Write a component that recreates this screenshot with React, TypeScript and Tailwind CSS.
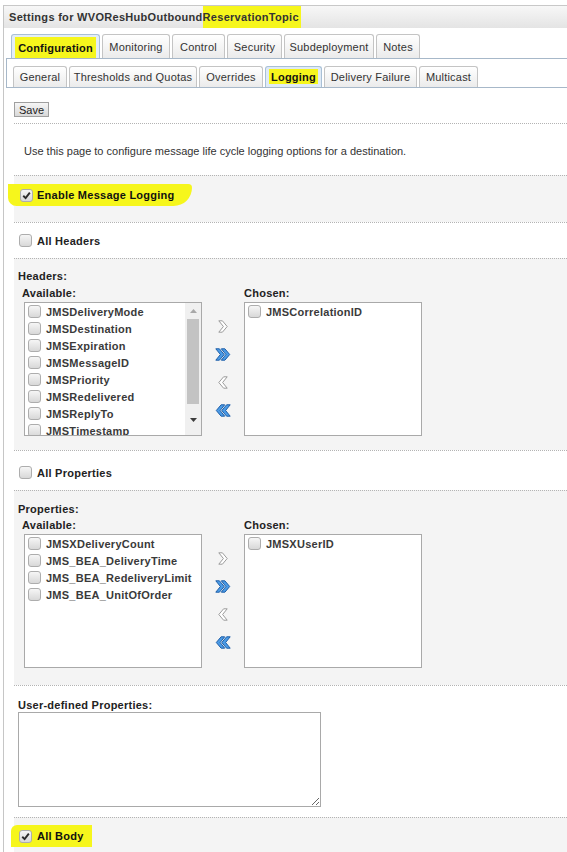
import React from "react";

const HL = "bg-[#f6f61c]";

function Box({ checked = false }: { checked?: boolean }) {
  return (
    <span className="inline-flex h-[13px] w-[13px] shrink-0 items-center justify-center rounded-[3px] border border-[#adadad] bg-gradient-to-b from-[#f6f6f6] to-[#d8d8d8]">
      {checked && (
        <svg viewBox="0 0 10 10" className="h-[9px] w-[9px]">
          <path d="M1.4 5.3 L4 7.9 L8.7 1.8" fill="none" stroke="#2b2b2b" strokeWidth="2.1" />
        </svg>
      )}
    </span>
  );
}

function Chevron({ dir, double }: { dir: "right" | "left"; double?: boolean }) {
  const fill = double ? "#4b9be6" : "#ffffff";
  const stroke = double ? "#1f5fa8" : "#9c9c9c";
  const shape = "M0.8 0.8 H4.4 L9.2 6.5 L4.4 12.2 H0.8 L5.4 6.5 Z";
  return (
    <svg viewBox="0 0 16 13" className="h-[13px] w-[16px]">
      <g transform={dir === "left" ? "translate(16 0) scale(-1 1)" : undefined}>
        {double ? (
          <>
            <path d={shape} fill={fill} stroke={stroke} strokeWidth="1" strokeLinejoin="round" />
            <path d={shape} transform="translate(5.5 0)" fill={fill} stroke={stroke} strokeWidth="1" strokeLinejoin="round" />
          </>
        ) : (
          <path d={shape} transform="translate(3 0)" fill={fill} stroke={stroke} strokeWidth="1" strokeLinejoin="round" />
        )}
      </g>
    </svg>
  );
}

function ListBox({ items, scroll }: { items: string[]; scroll?: boolean }) {
  return (
    <div className="relative h-[134px] w-[178px] overflow-hidden border border-[#a9a9a9] bg-white">
      <div className="pl-[3px]">
        {items.map((it) => (
          <div key={it} className="flex h-[17px] items-center gap-[5px]">
            <Box />
            <span className="whitespace-nowrap font-bold tracking-[0.25px] text-[#3a3a3a]">{it}</span>
          </div>
        ))}
      </div>
      {scroll && (
        <div className="absolute bottom-0 right-0 top-0 flex w-[16px] flex-col bg-[#f0f0f0]">
          <div className="flex h-[16px] items-center justify-center">
            <svg viewBox="0 0 7 4" className="h-[4px] w-[7px]">
              <path d="M0 4 L3.5 0 L7 4 Z" fill="#a8a8a8" />
            </svg>
          </div>
          <div className="mx-[2px] h-[85px] bg-[#c3c3c3]" />
          <div className="flex flex-1 items-center justify-center">
            <svg viewBox="0 0 7 4" className="h-[4px] w-[7px]">
              <path d="M0 0 L3.5 4 L7 0 Z" fill="#3c3c3c" />
            </svg>
          </div>
        </div>
      )}
    </div>
  );
}

function Shuttle({ available, chosen, scroll }: { available: string[]; chosen: string[]; scroll?: boolean }) {
  return (
    <div className="flex">
      <div className="flex flex-col">
        <div className="ml-[4px] h-[14px] font-bold leading-[14px] tracking-[0.25px] text-[#222]">Available:</div>
        <div className="ml-[6px] mt-[2px]">
          <ListBox items={available} scroll={scroll} />
        </div>
      </div>
      <div className="flex w-[42px] flex-col items-center pt-[34px]">
        <div className="flex h-[28px] items-start"><Chevron dir="right" /></div>
        <div className="flex h-[28px] items-start"><Chevron dir="right" double /></div>
        <div className="flex h-[28px] items-start"><Chevron dir="left" /></div>
        <div className="flex h-[28px] items-start"><Chevron dir="left" double /></div>
      </div>
      <div className="flex flex-col">
        <div className="h-[14px] font-bold leading-[14px] tracking-[0.25px] text-[#222]">Chosen:</div>
        <div className="mt-[2px]">
          <ListBox items={chosen} />
        </div>
      </div>
    </div>
  );
}

const mainTabs = [
  { label: "Monitoring", w: "w-[68px]" },
  { label: "Control", w: "w-[53px]" },
  { label: "Security", w: "w-[55px]" },
  { label: "Subdeployment", w: "w-[90px]" },
  { label: "Notes", w: "w-[44px]" },
];

const subTabs = [
  { label: "General", w: "w-[54px]" },
  { label: "Thresholds and Quotas", w: "w-[128px]" },
  { label: "Overrides", w: "w-[64px]" },
  { label: "Logging", w: "w-[57px]", active: true },
  { label: "Delivery Failure", w: "w-[93px]" },
  { label: "Multicast", w: "w-[59px]" },
];

const tabBase =
  "flex items-center justify-center rounded-t-[3px] border border-b-0 border-[#c4c4c4] bg-gradient-to-b from-white to-[#ebebeb] tracking-[0.2px] text-[#333]";

export default function App() {
  return (
    <div className="min-h-[852px] bg-white pl-[3px] pt-[5px] font-['Liberation_Sans',Tahoma,Arial,sans-serif] text-[11px] leading-[14px] text-[#333]">
      <div className="min-h-[847px] border-l border-[#c6c6c6]">
        {/* title bar */}
        <div className="flex h-[23px] items-center border-t border-[#c8c8c8] bg-gradient-to-b from-[#f7f7f7] to-[#e4e4e4] pl-[5px] font-bold tracking-[0.3px] text-[#333]">
          <span>Settings for WVOResHubOutbound</span>
          <span className={`${HL} flex h-[22px] items-center pr-[2px]`}>ReservationTopic</span>
        </div>

        {/* main tabs */}
        <div className="mt-[6px] flex h-[24px] gap-[2px] pl-[7px]">
          <div className="flex w-[89px] items-center justify-center rounded-t-[3px] border border-b-0 border-[#a9c0d6] bg-[#e3edf7] px-[3px] pt-[2px]">
            <span className={`${HL} flex h-[21px] w-full items-center justify-center font-bold tracking-[0.2px] text-[#111]`}>Configuration</span>
          </div>
          {mainTabs.map((t) => (
            <div key={t.label} className={`${tabBase} ${t.w}`}>
              {t.label}
            </div>
          ))}
        </div>

        {/* sub tabs */}
        <div className="ml-[2px] h-[30px] border-y border-l border-[#a7b8c9] pl-[6px] pt-[7px]">
          <div className="flex h-[21px] gap-[2px]">
            {subTabs.map((t) =>
              t.active ? (
                <div key={t.label} className={`flex ${t.w} flex-col rounded-t-[3px] border border-b-0 border-[#a9c0d6] bg-[#dfeaf6] px-[3px] pt-[2px]`}>
                  <span className={`${HL} flex h-[15px] items-center justify-center font-bold tracking-[0.2px] text-[#111]`}>{t.label}</span>
                </div>
              ) : (
                <div key={t.label} className={`${tabBase} ${t.w}`}>
                  {t.label}
                </div>
              )
            )}
          </div>
        </div>

        {/* content */}
        <div className="pl-[10px]">
          <div className="pb-[6px] pt-[14px]">
            <button className="flex h-[15px] w-[35px] items-center justify-center border border-[#9f9f9f] bg-gradient-to-b from-[#f6f6f6] to-[#d9d9d9] text-[11px] text-[#222]">
              Save
            </button>
          </div>

          <div className="h-[52px] border-t border-dotted border-[#b3b3b3] pl-[10px] pt-[20px]">
            Use this page to configure message life cycle logging options for a destination.
          </div>

          <div className="h-[47px] border-t border-dotted border-[#b3b3b3] bg-[#f4f4f4] pt-[8px]">
            <div className={`${HL} -ml-[6px] inline-flex h-[22px] w-[184px] items-center gap-[4px] rounded-bl-[14px] rounded-br-[30px] rounded-tr-[6px] pl-[12px]`}>
              <Box checked />
              <span className="font-bold tracking-[0.25px] text-[#111]">Enable Message Logging</span>
            </div>
          </div>

          <div className="flex h-[36px] items-start gap-[5px] border-t border-dotted border-[#b3b3b3] pl-[5px] pt-[11px]">
            <Box />
            <span className="font-bold tracking-[0.25px] text-[#222]">All Headers</span>
          </div>

          <div className="h-[192px] border-t border-dotted border-[#b3b3b3] bg-[#f4f4f4] pl-[4px] pt-[10px]">
            <div className="font-bold tracking-[0.25px] text-[#222]">Headers:</div>
            <div className="mt-[3px]">
              <Shuttle
                scroll
                available={[
                  "JMSDeliveryMode",
                  "JMSDestination",
                  "JMSExpiration",
                  "JMSMessageID",
                  "JMSPriority",
                  "JMSRedelivered",
                  "JMSReplyTo",
                  "JMSTimestamp",
                ]}
                chosen={["JMSCorrelationID"]}
              />
            </div>
          </div>

          <div className="flex h-[40px] items-start gap-[5px] border-t border-dotted border-[#b3b3b3] pl-[5px] pt-[15px]">
            <Box />
            <span className="font-bold tracking-[0.25px] text-[#222]">All Properties</span>
          </div>

          <div className="h-[195px] border-t border-dotted border-[#b3b3b3] bg-[#f4f4f4] pl-[4px] pt-[11px]">
            <div className="font-bold tracking-[0.25px] text-[#222]">Properties:</div>
            <div className="mt-[2px]">
              <Shuttle
                available={["JMSXDeliveryCount", "JMS_BEA_DeliveryTime", "JMS_BEA_RedeliveryLimit", "JMS_BEA_UnitOfOrder"]}
                chosen={["JMSXUserID"]}
              />
            </div>
          </div>

          <div className="h-[132px] border-t border-dotted border-[#b3b3b3] pl-[4px] pt-[12px]">
            <div className="font-bold tracking-[0.25px] text-[#222]">User-defined Properties:</div>
            <textarea className="block h-[95px] w-[303px] resize border border-[#a9a9a9] bg-white" />
          </div>

          <div className="h-[40px] border-t border-dotted border-[#b3b3b3] bg-[#f4f4f4] pt-[7px]">
            <div className={`${HL} -ml-[3px] inline-flex h-[22px] w-[81px] items-center gap-[5px] rounded-tl-[6px] pl-[8px]`}>
              <Box checked />
              <span className="font-bold tracking-[0.25px] text-[#111]">All Body</span>
            </div>
          </div>
        </div>
      </div>
    </div>
  );
}
